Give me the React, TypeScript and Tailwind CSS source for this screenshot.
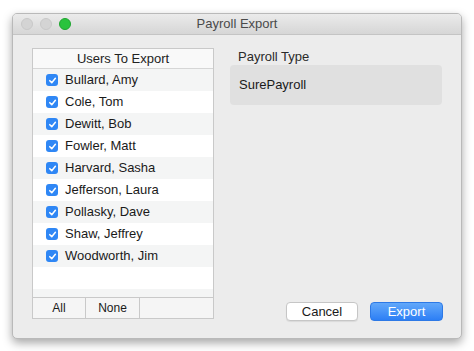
import React from "react";

const users = [
  "Bullard, Amy",
  "Cole, Tom",
  "Dewitt, Bob",
  "Fowler, Matt",
  "Harvard, Sasha",
  "Jefferson, Laura",
  "Pollasky, Dave",
  "Shaw, Jeffrey",
  "Woodworth, Jim",
];

function Check() {
  return (
    <span className="flex h-[12px] w-[12px] items-center justify-center rounded-[3px] bg-[#2f87f5]">
      <svg width="9" height="9" viewBox="0 0 10 10" fill="none">
        <path d="M2 5.2 L4.2 7.4 L8.2 2.6" stroke="white" strokeWidth="1.7" strokeLinecap="round" strokeLinejoin="round" />
      </svg>
    </span>
  );
}

export default function App() {
  return (
    <div className="h-[351px] w-[474px] bg-white pl-[12px] pt-[13px]" style={{ fontFamily: '"Liberation Sans", Arial, sans-serif' }}>
      <div className="flex h-[326px] w-[450px] flex-col overflow-hidden rounded-[5px] border border-[#b9b9b9] bg-[#ececec] shadow-[0_4px_10px_rgba(0,0,0,0.35)]">
        <div className="relative flex h-[21px] shrink-0 items-center justify-center border-b border-[#c4c4c4] bg-gradient-to-b from-[#ebebeb] to-[#d6d6d6]">
          <div className="absolute left-[8px] top-[4px] flex gap-[7px]">
            <span className="h-[12px] w-[12px] rounded-full border border-[#c8c8c8] bg-[#d4d4d4]" />
            <span className="h-[12px] w-[12px] rounded-full border border-[#c8c8c8] bg-[#d4d4d4]" />
            <span className="h-[12px] w-[12px] rounded-full border border-[#1ea52f] bg-[#2ac33d]" />
          </div>
          <span className="text-[13px] text-[#4a4a4a]">Payroll Export</span>
        </div>
        <div className="flex min-h-0 flex-1 pb-[17px] pl-[19px] pt-[13px]">
          <div className="mb-[2px] flex min-h-0 w-[182px] flex-col border border-[#c9c9c9] bg-white">
            <div className="flex h-[20px] shrink-0 items-center justify-center border-b border-[#d6d6d6] bg-[#f9f9f9] text-[13px] text-[#222]">
              Users To Export
            </div>
            <div className="min-h-0 flex-1 overflow-hidden">
              {users.map((u, i) => (
                <div key={u} className={`flex h-[22px] items-center gap-[7px] pl-[13px] text-[13px] text-[#1a1a1a] ${i % 2 === 0 ? "bg-[#f4f5f5]" : "bg-white"}`}>
                  <Check />
                  <span>{u}</span>
                </div>
              ))}
              <div className="h-[22px] bg-white" />
              <div className="h-[22px] bg-[#f4f5f5]" />
            </div>
            <div className="flex h-[21px] shrink-0 border-t border-[#c9c9c9] bg-[#f5f5f5] text-[12px] text-[#1a1a1a]">
              <div className="flex w-[53px] items-center justify-center border-r border-[#c9c9c9]">All</div>
              <div className="flex w-[54px] items-center justify-center border-r border-[#c9c9c9]">None</div>
            </div>
          </div>
          <div className="ml-[16px] flex w-[213px] flex-col">
            <div className="pl-[8px] pt-[1px] text-[13px] leading-[15px] text-[#2a2a2a]">Payroll Type</div>
            <div className="mt-[1px] flex h-[40px] w-[212px] shrink-0 items-center rounded-[4px] bg-[#e0e0e0] pl-[9px] text-[13px] text-[#1a1a1a]">
              SurePayroll
            </div>
            <div className="mt-auto flex justify-end gap-[12px]">
              <button className="h-[19px] w-[72px] rounded-[4px] border border-[#c6c6c6] bg-white text-[13px] leading-[17px] text-[#1a1a1a] shadow-[0_1px_1px_rgba(0,0,0,0.08)]">
                Cancel
              </button>
              <button className="h-[19px] w-[73px] rounded-[4px] border border-[#2d79e6] bg-gradient-to-b from-[#62a8fa] to-[#2c7ff5] text-[13px] leading-[17px] text-white">
                Export
              </button>
            </div>
          </div>
        </div>
      </div>
    </div>
  );
}
